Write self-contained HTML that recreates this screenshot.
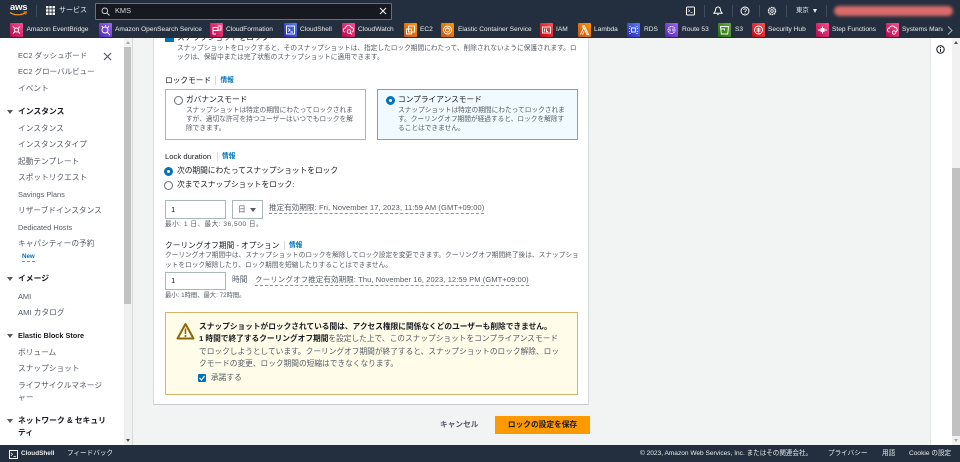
<!DOCTYPE html>
<html lang="ja"><head><meta charset="utf-8"><title>EC2</title>
<style>
html,body{margin:0;padding:0}
html{background:#f2f3f3}
body{width:960px;height:462px;overflow:hidden;position:relative;background:#f2f3f3;font-family:"Liberation Sans","Noto Sans CJK JP",sans-serif;color:#16191f;filter:blur(.3px)}
.a,.t,.l,.s,.n,.h,.d,.w,.i{position:absolute}
.t,.l,.s,.n,.h,.d,.w,.i{white-space:nowrap}
.t{font-size:7.7px;line-height:12px;color:#16191f}
.d{font-size:6.7px;line-height:9px;color:#545b64}
.i{font-size:6.7px;line-height:10px;color:#0073bb;font-weight:700}
.l{font-size:7.7px;line-height:12px;color:#545b64;left:18px}
.h{font-size:7.8px;line-height:12px;color:#16191f;font-weight:700;left:18px}
.h:before{content:"";position:absolute;left:-11px;top:4px;border-left:3px solid transparent;border-right:3px solid transparent;border-top:4px solid #545b64}
.s{font-size:6.6px;line-height:12px;color:#eaeded;top:24px}
.n{font-size:7px;line-height:12px;color:#eaeded}
.b{position:absolute;top:23px;width:13px;height:14px;border-radius:1px}
.b svg{display:block;width:13px;height:14px;fill:none;stroke:#fff;stroke-width:.9}
.r{position:absolute;width:9px;height:9px;box-sizing:border-box;border-radius:50%;border:1px solid #687078;background:#fff}
.r.on{border:3px solid #0073bb}
.in{position:absolute;box-sizing:border-box;border:1px solid #aab7b8;background:#fff;font-size:7.7px;line-height:17px;padding-left:5px;color:#16191f}
.dash{border-bottom:1px dashed #879596;padding-bottom:0}
.sep{position:absolute;width:1px;background:#d5dbdb}
.nsep{position:absolute;width:1px;background:#414d5c}
</style></head><body>

<!-- sidebar -->
<div class="a" style="left:0;top:38px;width:124px;height:407px;background:#fff"></div>
<div class="a" style="left:124px;top:38px;width:8px;height:407px;background:#f1f1f1"></div>
<div class="a" style="left:124px;top:47px;width:7px;height:257px;background:#c1c1c1"></div>
<div class="a" style="left:132px;top:38px;width:1px;height:407px;background:#d5dbdb"></div>
<div class="a" style="left:126px;top:41px;border-left:2px solid transparent;border-right:2px solid transparent;border-bottom:3px solid #a8a8a8"></div>
<div class="a" style="left:126px;top:439px;border-left:2px solid transparent;border-right:2px solid transparent;border-top:3px solid #505050"></div>

<div class="l" style="top:50px;font-size:7.5px">EC2 ダッシュボード</div>
<svg class="a" style="left:103px;top:52px" width="9" height="9" viewBox="0 0 9 9"><path d="M1 1l7 7M8 1l-7 7" stroke="#545b64" stroke-width="1.2"/></svg>
<div class="l" style="top:66px;font-size:7.5px">EC2 グローバルビュー</div>
<div class="l" style="top:83px">イベント</div>
<div class="h" style="top:106px">インスタンス</div>
<div class="l" style="top:123px">インスタンス</div>
<div class="l" style="top:139px">インスタンスタイプ</div>
<div class="l" style="top:156px">起動テンプレート</div>
<div class="l" style="top:172px">スポットリクエスト</div>
<div class="l" style="top:189px;font-size:7.4px">Savings Plans</div>
<div class="l" style="top:205px">リザーブドインスタンス</div>
<div class="l" style="top:222px;font-size:7.4px">Dedicated Hosts</div>
<div class="l" style="top:238px">キャパシティーの予約</div>
<div class="a" style="left:22px;top:252px;font-size:6.2px;line-height:9px;font-weight:700;color:#0073bb;border-bottom:1px dashed #879596">New</div>
<div class="h" style="top:273px">イメージ</div>
<div class="l" style="top:291px;font-size:7.4px">AMI</div>
<div class="l" style="top:307px">AMI カタログ</div>
<div class="h" style="top:330px;font-size:7.3px">Elastic Block Store</div>
<div class="l" style="top:347px">ボリューム</div>
<div class="l" style="top:363px">スナップショット</div>
<div class="l" style="top:380px">ライフサイクルマネージ</div>
<div class="l" style="top:392px">ャー</div>
<div class="h" style="top:415px">ネットワーク &amp; セキュリ</div>
<div class="a" style="left:18px;top:427px;font-size:7.8px;line-height:12px;font-weight:700;color:#16191f">ティ</div>

<!-- card -->
<div class="a" style="left:153px;top:38px;width:436px;height:367px;background:#fff;box-sizing:border-box;border:1px solid #d5dbdb;border-top:0;border-bottom:1px solid #c6ccd0"></div>

<div class="a" style="left:165px;top:38px;width:9px;height:4px;background:#0073bb"></div>
<div class="t" style="left:177px;top:32px;clip-path:inset(6px 0 0 0)">スナップショットをロック</div>
<div class="d" style="left:177px;top:44px">スナップショットをロックすると、そのスナップショットは、指定したロック期間にわたって、削除されないように保護されます。ロ</div>
<div class="d" style="left:177px;top:53px">ックは、保留中または完了状態のスナップショットに適用できます。</div>

<div class="t" style="left:165px;top:75px">ロックモード</div>
<div class="sep" style="left:215px;top:76px;height:9px"></div>
<div class="i" style="left:220.5px;top:76px">情報</div>

<div class="a" style="left:165px;top:89px;width:201px;height:51px;box-sizing:border-box;border:1px solid #aab7b8;background:#fff"></div>
<div class="r" style="left:173.5px;top:96px"></div>
<div class="t" style="left:186px;top:94px">ガバナンスモード</div>
<div class="d" style="left:186px;top:106px">スナップショットは特定の期間にわたってロックされま</div>
<div class="d" style="left:186px;top:115px">すが、適切な許可を持つユーザーはいつでもロックを解</div>
<div class="d" style="left:186px;top:124px">除できます。</div>

<div class="a" style="left:377px;top:89px;width:201px;height:51px;box-sizing:border-box;border:1px solid #44b9d6;background:#f1faff"></div>
<div class="r on" style="left:386px;top:96px"></div>
<div class="t" style="left:398px;top:94px">コンプライアンスモード</div>
<div class="d" style="left:398px;top:106px">スナップショットは特定の期間にわたってロックされま</div>
<div class="d" style="left:398px;top:115px">す。クーリングオフ期間が経過すると、ロックを解除す</div>
<div class="d" style="left:398px;top:124px">ることはできません。</div>

<div class="t" style="left:165px;top:151px">Lock duration</div>
<div class="sep" style="left:217px;top:152px;height:9px"></div>
<div class="i" style="left:222px;top:152px">情報</div>

<div class="r on" style="left:164px;top:167px"></div>
<div class="t" style="left:177px;top:165px">次の期間にわたってスナップショットをロック</div>
<div class="r" style="left:164px;top:181px"></div>
<div class="t" style="left:177px;top:179px">次までスナップショットをロック:</div>

<div class="in" style="left:165px;top:200px;width:61px;height:19px">1</div>
<div class="in" style="left:232px;top:200px;width:31px;height:19px;color:#545b64">日</div>
<div class="a" style="left:250px;top:208px;border-left:3px solid transparent;border-right:3px solid transparent;border-top:4px solid #545b64"></div>
<div class="t dash" style="left:269px;top:202px;font-size:7.5px;letter-spacing:.1px;line-height:11px;color:#545b64">推定有効期限: Fri, November 17, 2023, 11:59 AM (GMT+09:00)</div>
<div class="d" style="left:165px;top:220px;font-size:6.6px;letter-spacing:.5px">最小: 1 日、最大: 36,500 日。</div>

<div class="t" style="left:165px;top:240px">クーリングオフ期間 - オプション</div>
<div class="sep" style="left:284px;top:241px;height:9px"></div>
<div class="i" style="left:289px;top:241px">情報</div>
<div class="d" style="left:165px;top:251px">クーリングオフ期間中は、スナップショットのロックを解除してロック設定を変更できます。クーリングオフ期間終了後は、スナップショ</div>
<div class="d" style="left:165px;top:261px">ットをロック解除したり、ロック期間を短縮したりすることはできません。</div>

<div class="in" style="left:165px;top:272px;width:61px;height:18px;line-height:16px">1</div>
<div class="t" style="left:232px;top:274px;color:#545b64">時間</div>
<div class="t dash" style="left:255px;top:274px;font-size:7.5px;letter-spacing:.1px;line-height:11px;color:#545b64">クーリングオフ推定有効期限: Thu, November 16, 2023, 12:59 PM (GMT+09:00)</div>
<div class="d" style="left:165px;top:291px;font-size:6.3px">最小: 1時間、最大: 72時間。</div>

<!-- warning -->
<div class="a" style="left:165px;top:312px;width:413px;height:83px;box-sizing:border-box;border:1px solid #d5b46a;background:#fffce9"></div>
<svg class="a" style="left:176px;top:322px" width="19" height="18" viewBox="0 0 19 18"><path d="M9.5 2L1.500 16.500h16z" fill="none" stroke="#8d6605" stroke-width="2" stroke-linejoin="round"/><path d="M9.500 6.500v5.500M9.500 13v2" stroke="#8d6605" stroke-width="1.600"/></svg>
<div class="t" style="left:199px;top:321px;font-weight:700">スナップショットがロックされている間は、アクセス権限に関係なくどのユーザーも削除できません。</div>
<div class="t" style="left:199px;top:333px;color:#545b64"><b style="color:#16191f">1 時間で終了するクーリングオフ期間</b>を設定した上で、このスナップショットをコンプライアンスモード</div>
<div class="t" style="left:199px;top:346px;color:#545b64">でロックしようとしています。クーリングオフ期間が終了すると、スナップショットのロック解除、ロッ</div>
<div class="t" style="left:199px;top:358px;color:#545b64">クモードの変更、ロック期間の短縮はできなくなります。</div>
<div class="a" style="left:198px;top:374px;width:8px;height:8px;background:#0073bb;border-radius:1px"></div>
<svg class="a" style="left:198px;top:374px" width="8" height="8" viewBox="0 0 8 8"><path d="M1.500 4l2 2 3-4" fill="none" stroke="#fff" stroke-width="1.200"/></svg>
<div class="t" style="left:211px;top:372px;color:#545b64">承諾する</div>

<!-- actions -->
<div class="t" style="left:440px;top:419px;font-weight:700;color:#545b64;font-size:7.7px">キャンセル</div>
<div class="a" style="left:495px;top:416px;width:95px;height:18px;background:#ff9900;font-size:7.7px;line-height:18px;font-weight:700;color:#16191f;text-align:center;white-space:nowrap">ロックの設定を保存</div>

<!-- right panel -->
<div class="a" style="left:930px;top:38px;width:22px;height:407px;background:#fff;border-left:1px solid #e3e6e6;box-sizing:border-box"></div>
<svg class="a" style="left:936px;top:45px" width="9" height="9" viewBox="0 0 9 9"><circle cx="4.500" cy="4.500" r="3.700" fill="none" stroke="#16191f" stroke-width="1"/><path d="M4.500 3.800v3M4.500 2v1" stroke="#16191f" stroke-width="1"/></svg>
<div class="a" style="left:952px;top:38px;width:8px;height:407px;background:#f1f1f1"></div>
<div class="a" style="left:952px;top:168px;width:8px;height:268px;background:#c1c1c1"></div>
<div class="a" style="left:954px;top:41px;border-left:2px solid transparent;border-right:2px solid transparent;border-bottom:3px solid #505050"></div>
<div class="a" style="left:954px;top:439px;border-left:2px solid transparent;border-right:2px solid transparent;border-top:3px solid #a8a8a8"></div>

<!-- top nav -->
<div class="a" style="left:0;top:0;width:960px;height:38px;background:#232f3e"></div>
<div class="a" style="left:10px;top:3px;font-size:9.500px;line-height:10px;font-weight:700;color:#fff;letter-spacing:-.2px">aws</div>
<svg class="a" style="left:9px;top:11px" width="19" height="6" viewBox="0 0 19 6"><path d="M1 1.500c4 3 11 3 15 .5" fill="none" stroke="#ff9900" stroke-width="1.100"/><path d="M14.500 1h3l-1 2.500" fill="none" stroke="#ff9900" stroke-width=".9"/></svg>
<div class="nsep" style="left:36px;top:5px;height:12px"></div>
<svg class="a" style="left:46px;top:6px" width="9" height="9" viewBox="0 0 9 9" fill="#fff"><rect width="2.400" height="2.400"/><rect x="3.300" width="2.400" height="2.400"/><rect x="6.600" width="2.400" height="2.400"/><rect y="3.300" width="2.400" height="2.400"/><rect x="3.300" y="3.300" width="2.400" height="2.400"/><rect x="6.600" y="3.300" width="2.400" height="2.400"/><rect y="6.600" width="2.400" height="2.400"/><rect x="3.300" y="6.600" width="2.400" height="2.400"/><rect x="6.600" y="6.600" width="2.400" height="2.400"/></svg>
<div class="n" style="left:59px;top:5px;font-size:7px">サービス</div>
<div class="a" style="left:95px;top:3px;width:297px;height:17px;box-sizing:border-box;background:#16191f;border:1px solid #687078;border-radius:1px"></div>
<svg class="a" style="left:101px;top:7px" width="9" height="9" viewBox="0 0 9 9"><circle cx="3.800" cy="3.800" r="2.800" fill="none" stroke="#d5dbdb" stroke-width=".9"/><path d="M5.800 5.800L8.500 8.500" stroke="#d5dbdb" stroke-width="1"/></svg>
<div class="n" style="left:115px;top:5px;font-size:7.400px;color:#d5dbdb">KMS</div>
<svg class="a" style="left:379px;top:7px" width="8" height="8" viewBox="0 0 8 8"><path d="M1 1l6 6M7 1L1 7" stroke="#eaeded" stroke-width="1.100"/></svg>

<svg class="a" style="left:686px;top:6px" width="9" height="10" viewBox="0 0 9 10"><rect x=".5" y="1" width="8" height="8" rx="1" fill="none" stroke="#fff"/><path d="M2.300 3.400l1.400 1.300-1.400 1.300M4.500 6.300h2" fill="none" stroke="#fff" stroke-width=".7"/></svg>
<div class="nsep" style="left:704px;top:5px;height:12px"></div>
<svg class="a" style="left:713px;top:6px" width="10" height="10" viewBox="0 0 10 10"><path d="M5 1C3 1 2.600 2.700 2.500 4.200 2.400 5.600 1.500 6.300.8 7.300h8.400C8.500 6.300 7.600 5.600 7.500 4.200 7.400 2.700 7 1 5 1z" fill="none" stroke="#fff"/><path d="M4 8.300h2v.8H4z" fill="#fff"/></svg>
<div class="nsep" style="left:732px;top:5px;height:12px"></div>
<svg class="a" style="left:740px;top:6px" width="10" height="10" viewBox="0 0 10 10"><circle cx="5" cy="5" r="4" fill="none" stroke="#fff"/><path d="M3.700 4c0-1.700 2.700-1.700 2.700 0 0 1-1.400 1-1.400 2M5 6.800v1" fill="none" stroke="#fff" stroke-width=".8"/></svg>
<div class="nsep" style="left:759px;top:5px;height:12px"></div>
<svg class="a" style="left:767px;top:6px" width="10" height="10" viewBox="0 0 10 10"><circle cx="5" cy="5" r="3.500" fill="none" stroke="#fff" stroke-width="1.400" stroke-dasharray="1.600 .6"/><circle cx="5" cy="5" r="1.300" fill="none" stroke="#fff" stroke-width=".8"/></svg>
<div class="nsep" style="left:786px;top:5px;height:12px"></div>
<div class="n" style="left:796px;top:5px;font-size:6.400px">東京</div>
<div class="a" style="left:813px;top:9px;border-left:2.500px solid transparent;border-right:2.500px solid transparent;border-top:4px solid #eaeded"></div>
<div class="nsep" style="left:826px;top:5px;height:12px"></div>
<div class="a" style="left:834px;top:6px;width:119px;height:10px;background:#d96b6b;border-radius:5px;filter:blur(1.500px)"></div>

<!-- shortcuts -->
<div class="b" style="left:10px;background:linear-gradient(45deg,#b0084d,#ff4f8b)"><svg viewBox="0 0 13 14"><circle cx="6.500" cy="7" r="2"/><path d="M3 3.500l2 2M10 3.500l-2 2M3 10.500l2-2M10 10.500l-2-2"/></svg></div>
<div class="s" style="left:26.500px">Amazon EventBridge</div>
<div class="b" style="left:99px;background:linear-gradient(45deg,#4d27a8,#a166ff)"><svg viewBox="0 0 13 14"><circle cx="6" cy="7" r="3"/><path d="M8.200 9.200L11 12M3 3l1 2M6.500 2v2M10 3L8.500 5"/></svg></div>
<div class="s" style="left:115px">Amazon OpenSearch Service</div>
<div class="b" style="left:210px;background:linear-gradient(45deg,#b0084d,#ff4f8b)"><svg viewBox="0 0 13 14"><path d="M3 4.500h5v3H3zM3 7.500v3.500h3M8 3h3v4H8"/></svg></div>
<div class="s" style="left:226px">CloudFormation</div>
<div class="b" style="left:284px;background:linear-gradient(45deg,#2e27ad,#527fff)"><svg viewBox="0 0 13 14"><rect x="2.500" y="3" width="8" height="8"/><path d="M4.300 5.500L6 7 4.300 8.500M6.500 9h2.500"/></svg></div>
<div class="s" style="left:300px">CloudShell</div>
<div class="b" style="left:342px;background:linear-gradient(45deg,#b0084d,#ff4f8b)"><svg viewBox="0 0 13 14"><path d="M3 9a2 2 0 0 1 .500-4 3 3 0 0 1 5.800-.5 2.300 2.300 0 0 1 .7 4.500"/><circle cx="7" cy="8.500" r="1.800"/><path d="M8.300 9.800L10 11.500"/></svg></div>
<div class="s" style="left:358px">CloudWatch</div>
<div class="b" style="left:404px;background:linear-gradient(45deg,#c8511b,#ff9900)"><svg viewBox="0 0 13 14"><rect x="4.500" y="3" width="6" height="6"/><rect x="2.500" y="6" width="5" height="5"/></svg></div>
<div class="s" style="left:420px">EC2</div>
<div class="b" style="left:441px;background:linear-gradient(45deg,#c8511b,#ff9900)"><svg viewBox="0 0 13 14"><circle cx="6.500" cy="7" r="4"/><circle cx="6.500" cy="7" r="2"/></svg></div>
<div class="s" style="left:458px">Elastic Container Service</div>
<div class="b" style="left:540px;background:linear-gradient(45deg,#bd0816,#ff5252)"><svg viewBox="0 0 13 14"><rect x="2.500" y="4" width="8" height="6"/><path d="M4.500 5.500v3M6.500 5.500v3h1.500"/></svg></div>
<div class="s" style="left:556px">IAM</div>
<div class="b" style="left:578px;background:linear-gradient(45deg,#c8511b,#ff9900)"><svg viewBox="0 0 13 14"><path d="M2.500 11.500L5.500 5 4.500 3h2l4 8.500H9L6 5"/><path d="M4.500 11.500L6 8.500"/></svg></div>
<div class="s" style="left:594px">Lambda</div>
<div class="b" style="left:627px;background:linear-gradient(45deg,#2e27ad,#527fff)"><svg viewBox="0 0 13 14"><rect x="4.500" y="5" width="4" height="4"/><path d="M2.500 3.500h1M9.500 3.500h1M2.500 10.500h1M9.500 10.500h1M2.500 5v1M10.500 5v1M2.500 8v1M10.500 8v1" stroke-dasharray="1 .5"/></svg></div>
<div class="s" style="left:644px">RDS</div>
<div class="b" style="left:665px;background:linear-gradient(45deg,#4d27a8,#a166ff)"><svg viewBox="0 0 13 14"><circle cx="6.500" cy="7" r="3.500" stroke-dasharray="1.500 .6"/><path d="M5 5.500v3M8 5.500v3"/></svg></div>
<div class="s" style="left:682px">Route 53</div>
<div class="b" style="left:718px;background:linear-gradient(45deg,#1b660f,#6cae3e)"><svg viewBox="0 0 13 14"><path d="M2.500 3.500h8l-.8 7.500H3.300zM2.500 6h4v1.500"/></svg></div>
<div class="s" style="left:735px">S3</div>
<div class="b" style="left:752px;background:linear-gradient(45deg,#bd0816,#ff5252)"><svg viewBox="0 0 13 14"><circle cx="6.500" cy="7" r="4"/><path d="M6.500 4.500v5M4.500 6h4M4.500 8h4"/></svg></div>
<div class="s" style="left:768px">Security Hub</div>
<div class="b" style="left:816px;background:linear-gradient(45deg,#b0084d,#ff4f8b)"><svg viewBox="0 0 13 14"><path d="M2 7h9M6.500 3.500v7" /><rect x="5" y="5.500" width="3" height="3" fill="#fff"/></svg></div>
<div class="s" style="left:832px">Step Functions</div>
<div class="b" style="left:886px;background:linear-gradient(45deg,#b0084d,#ff4f8b)"><svg viewBox="0 0 13 14"><path d="M3.500 9a2 2 0 0 1 0-4 3 3 0 0 1 5.500-.5 2.300 2.300 0 0 1 .5 4.500"/><circle cx="8" cy="9.500" r="1.700"/></svg></div>
<div class="s" style="left:902px;width:41px;overflow:hidden">Systems Manager</div>
<svg class="a" style="left:947px;top:26px" width="6" height="9" viewBox="0 0 6 9"><path d="M1 .5l4 4-4 4" fill="none" stroke="#aab7b8"/></svg>

<!-- footer -->
<div class="a" style="left:0;top:445px;width:960px;height:17px;background:#232f3e"></div>
<svg class="a" style="left:9px;top:450px" width="9" height="9" viewBox="0 0 9 9"><rect x=".5" y=".5" width="8" height="8" fill="none" stroke="#fff"/><path d="M2 2.800l1.500 1.500L2 5.800M4.500 6.500h2.500" fill="none" stroke="#fff" stroke-width=".7"/></svg>
<div class="n" style="left:21px;top:448px;font-size:6.400px;font-weight:700">CloudShell</div>
<div class="n" style="left:67px;top:448px;font-size:6.600px">フィードバック</div>
<div class="n" style="left:640px;top:448px;font-size:6.550px">© 2023, Amazon Web Services, Inc. またはその関連会社。</div>
<div class="n" style="left:828px;top:448px;font-size:6.600px">プライバシー</div>
<div class="n" style="left:882px;top:448px;font-size:6.600px">用語</div>
<div class="n" style="left:909px;top:448px;font-size:6.600px">Cookie の設定</div>
</body></html>
